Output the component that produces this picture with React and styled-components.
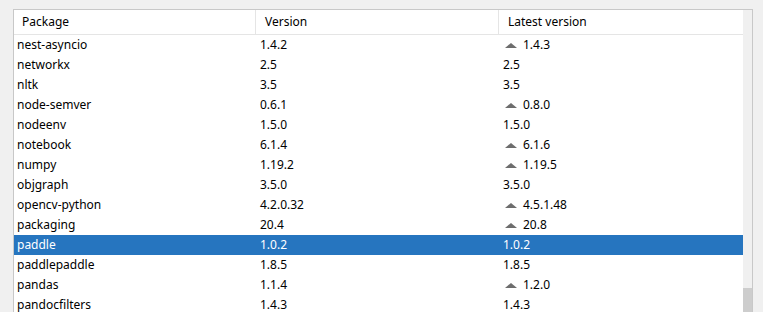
import React from "react";
import styled, { createGlobalStyle } from "styled-components";

const GlobalStyle = createGlobalStyle`
  html, body {
    margin: 0;
    padding: 0;
    background: #f0f0f0;
    overflow: hidden;
  }
`;

const Page = styled.div`
  width: 763px;
  height: 312px;
  padding: 9px 0 0 13px;
  box-sizing: border-box;
  overflow: hidden;
  background: #f0f0f0;
  font-family: "Noto Sans", "Open Sans", sans-serif;
  font-size: 12px;
  color: #000;
`;

const Panel = styled.div`
  display: flex;
  width: 740px;
  height: 303px;
  box-sizing: border-box;
  border: 1px solid #c8c8c8;
  border-bottom: none;
  background: #fff;
  overflow: hidden;
`;

const Table = styled.div`
  flex: 1;
  display: flex;
  flex-direction: column;
`;

const Row = styled.div`
  display: grid;
  flex-shrink: 0;
  grid-template-columns: 242px 243px 1fr;
  height: ${(p) => (p.$header ? "24px" : "20px")};
  line-height: ${(p) => (p.$header ? "24px" : "20px")};
  background: ${(p) => (p.$selected ? "#2675bf" : "#fff")};
  color: ${(p) => (p.$selected ? "#fff" : "#000")};
  border-bottom: ${(p) => (p.$header ? "1px solid #e5e5e5" : "none")};
`;

const HeadCell = styled.div`
  padding-left: ${(p) => (p.$first ? "8px" : "9px")};
  border-left: ${(p) => (p.$first ? "none" : "1px solid #e5e5e5")};
  margin-left: ${(p) => (p.$first ? "0" : "-1px")};
  white-space: nowrap;
`;

const Cell = styled.div`
  display: flex;
  align-items: center;
  padding-left: ${(p) => (p.$first ? "3px" : "4px")};
  white-space: nowrap;
`;

const Up = styled.span`
  display: inline-block;
  width: 0;
  height: 0;
  margin: 0 6px 0 2px;
  border-left: 6px solid transparent;
  border-right: 6px solid transparent;
  border-bottom: 5px solid ${(p) => (p.$light ? "#d0d0d0" : "#6d6d6d")};
`;

const ScrollTrack = styled.div`
  width: 9px;
  display: flex;
  flex-direction: column;
  background: #f0f0f0;
`;

const Thumb = styled.div`
  margin-top: 278px;
  flex: 1;
  background: #cdcdcd;
`;

const packages = [
  ["nest-asyncio", "1.4.2", "1.4.3", true],
  ["networkx", "2.5", "2.5", false],
  ["nltk", "3.5", "3.5", false],
  ["node-semver", "0.6.1", "0.8.0", true],
  ["nodeenv", "1.5.0", "1.5.0", false],
  ["notebook", "6.1.4", "6.1.6", true],
  ["numpy", "1.19.2", "1.19.5", true],
  ["objgraph", "3.5.0", "3.5.0", false],
  ["opencv-python", "4.2.0.32", "4.5.1.48", true],
  ["packaging", "20.4", "20.8", true],
  ["paddle", "1.0.2", "1.0.2", false],
  ["paddlepaddle", "1.8.5", "1.8.5", false],
  ["pandas", "1.1.4", "1.2.0", true],
  ["pandocfilters", "1.4.3", "1.4.3", false],
];

const SELECTED = "paddle";

export default function App() {
  return (
    <Page>
      <GlobalStyle />
      <Panel>
        <Table>
          <Row $header>
            <HeadCell $first>Package</HeadCell>
            <HeadCell>Version</HeadCell>
            <HeadCell>Latest version</HeadCell>
          </Row>
          {packages.map(([name, version, latest, upgrade]) => {
            const selected = name === SELECTED;
            return (
              <Row key={name} $selected={selected}>
                <Cell $first>{name}</Cell>
                <Cell>{version}</Cell>
                <Cell>
                  {upgrade && <Up $light={selected} />}
                  {latest}
                </Cell>
              </Row>
            );
          })}
        </Table>
        <ScrollTrack>
          <Thumb />
        </ScrollTrack>
      </Panel>
    </Page>
  );
}
